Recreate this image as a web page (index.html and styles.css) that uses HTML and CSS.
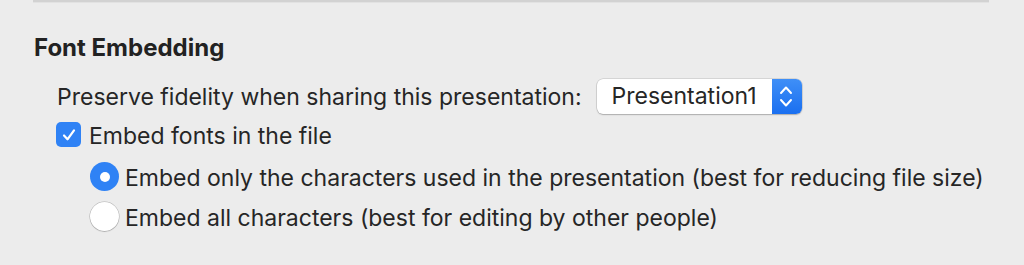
FILE: index.html
```html
<!DOCTYPE html>
<html>
<head>
<meta charset="utf-8">
<link rel="stylesheet" href="styles.css">
</head>
<body>
<div class="panel">
  <div class="sep"></div>
  <h2 class="title">Font Embedding</h2>
  <div class="row fidelity">
    <span class="label">Preserve fidelity when sharing this presentation:</span>
    <div class="popup">
      <span class="popup-text">Presentation1</span>
      <span class="popup-btn">
        <svg width="30" height="35" viewBox="0 0 30 35"><path d="M9 14 L14 8.5 L19 14 M9 21 L14 26.5 L19 21" fill="none" stroke="#fff" stroke-width="2" stroke-linecap="round" stroke-linejoin="round"/></svg>
      </span>
    </div>
  </div>
  <div class="row check-row">
    <span class="checkbox">
      <svg width="18" height="18" viewBox="0 0 18 18"><path d="M4 9.5 L7.5 13.3 L14 4.3" fill="none" stroke="#fff" stroke-width="2.2" stroke-linecap="round" stroke-linejoin="round"/></svg>
    </span>
    <span class="label">Embed fonts in the file</span>
  </div>
  <div class="radios">
    <div class="row radio-row">
      <span class="radio on"><span class="dot"></span></span>
      <span class="label">Embed only the characters used in the presentation (best for reducing file size)</span>
    </div>
    <div class="row radio-row">
      <span class="radio"></span>
      <span class="label">Embed all characters (best for editing by other people)</span>
    </div>
  </div>
</div>
</body>
</html>
```
FILE: styles.css
```css
html, body {
  margin: 0;
  padding: 0;
  background: #ececec;
}
body {
  width: 1024px;
  height: 265px;
  overflow: hidden;
  font-family: Inter, "Noto Sans", sans-serif;
  color: #262626;
}
.panel {
  display: flex;
  flex-direction: column;
}
.sep {
  margin-left: 33px;
  width: 956px;
  height: 2px;
  background: #d2d2d2;
  border-bottom: 1px solid #e2e2e2;
}
.title {
  margin: 31px 0 0 34px;
  font-size: 24px;
  font-weight: 700;
  line-height: 28px;
  color: #222;
}
.row {
  display: flex;
}
.label {
  font-size: 23px;
  line-height: 28px;
}
.fidelity {
  margin: 17px 0 0 57px;
  height: 35px;
  align-items: center;
}
.popup {
  margin-left: 15px;
  display: flex;
  width: 205px;
  height: 35px;
  background: #fff;
  border-radius: 6px;
  box-shadow: 0 0 0 0.5px rgba(0,0,0,0.18), 0 1px 1.5px rgba(0,0,0,0.2);
  overflow: hidden;
}
.popup-text {
  flex: 1;
  padding-left: 15px;
  font-size: 23px;
  line-height: 35px;
}
.popup-btn {
  width: 30px;
  display: flex;
  background: linear-gradient(#3f8ff7, #1a6ff0);
}
.check-row {
  margin: 8px 0 0 56px;
  height: 40px;
  gap: 8px;
  align-items: flex-start;
}
.checkbox {
  width: 25px;
  height: 25px;
  border-radius: 5px;
  background: #2f82f5;
  display: flex;
  align-items: center;
  justify-content: center;
}
.radios {
  margin-left: 90px;
  display: flex;
  flex-direction: column;
}
.radio-row {
  height: 40px;
  gap: 6px;
  align-items: flex-start;
}
.radio-row .label {
  margin-top: 2px;
}
.radio {
  width: 29px;
  height: 29px;
  box-sizing: border-box;
  border-radius: 50%;
  background: #fff;
  box-shadow: 0 0 0 0.5px rgba(0,0,0,0.25), 0 1px 1px rgba(0,0,0,0.15);
  display: flex;
  align-items: center;
  justify-content: center;
}
.radio.on {
  background: #2f82f5;
  box-shadow: none;
}
.dot {
  width: 10px;
  height: 10px;
  border-radius: 50%;
  background: #fff;
}
```
